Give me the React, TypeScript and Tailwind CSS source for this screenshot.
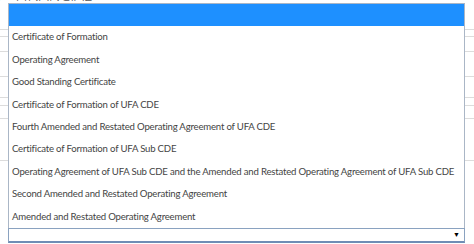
import React from "react";

const items = [
  "",
  "Certificate of Formation",
  "Operating Agreement",
  "Good Standing Certificate",
  "Certificate of Formation of UFA CDE",
  "Fourth Amended and Restated Operating Agreement of UFA CDE",
  "Certificate of Formation of UFA Sub CDE",
  "Operating Agreement of UFA Sub CDE and the Amended and Restated Operating Agreement of UFA Sub CDE",
  "Second Amended and Restated Operating Agreement",
  "Amended and Restated Operating Agreement",
];

const bgRows = [30, 7, 15, 25, 21, 8, 13, 42];

export default function App() {
  return (
    <div
      className="relative w-[474px] h-[244px] overflow-hidden bg-white"
      style={{ fontFamily: 'Lato, "Open Sans", sans-serif' }}
    >
      {/* page behind */}
      <div
        className="absolute left-[-8px] top-[-13px] text-[16px] leading-[16px] font-light text-[#555] whitespace-nowrap [word-spacing:8px]"
        style={{ fontFamily: '"Open Sans", sans-serif' }}
      >
        D FINANCIAL
      </div>
      <div className="flex flex-col w-full">
        {bgRows.map((h, i) => (
          <div
            key={i}
            className="border-b border-[#dcdcdc]"
            style={{ height: h }}
          />
        ))}
      </div>

      {/* dropdown popup */}
      <div className="absolute left-[8px] top-[3px] w-[457px] flex flex-col">
        <div className="flex flex-col border border-b-0 border-[#aab6c6] bg-white">
          {items.map((t, i) => (
            <div
              key={i}
              className={
                "h-[22.4px] flex items-center pl-[3px] text-[9.6px] tracking-[-0.2px] text-[#444] whitespace-nowrap " +
                (i === 0 ? "bg-[#1e90ff]" : "")
              }
            >
              {t}
            </div>
          ))}
        </div>
        <div className="h-[15px] border border-[#8aa2c0] border-b-2 border-b-[#6f8db5] bg-white flex items-center justify-end pr-[4px]">
          <span className="text-[7px] leading-none text-black">▼</span>
        </div>
      </div>
    </div>
  );
}
